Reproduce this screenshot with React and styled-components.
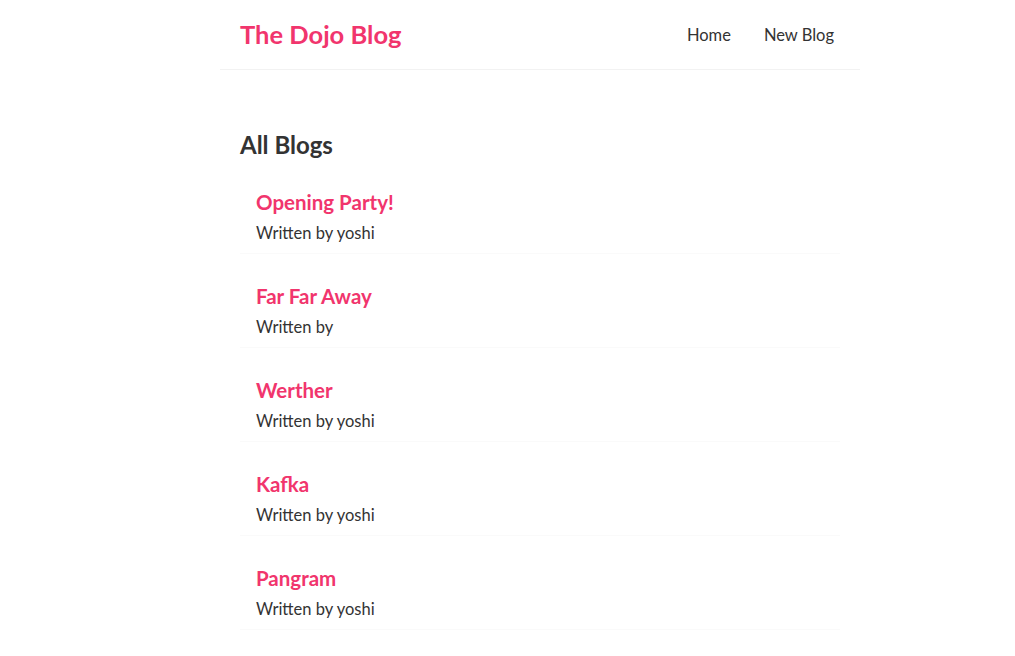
import React from "react";
import styled, { createGlobalStyle } from "styled-components";

const GlobalStyle = createGlobalStyle`
  * {
    margin: 0;
    font-family: "Lato", "Noto Sans", sans-serif;
    color: #333;
  }
  body {
    background: #fff;
  }
`;

// the page is centred on a slightly wider canvas than the window
const Page = styled.div`
  padding-left: 65px;
`;

const Navbar = styled.nav`
  padding: 20px;
  display: flex;
  align-items: center;
  max-width: 600px;
  margin: 0 auto;
  border-bottom: 1px solid #f2f2f2;
`;

const Brand = styled.h1`
  color: #f1356d;
  font-size: 25.5px;
  line-height: 29px;
  font-weight: 700;
`;

const Links = styled.div`
  margin-left: auto;
`;

const NavLink = styled.a`
  margin-left: 21px;
  text-decoration: none;
  padding: 6px;
  font-size: 16.5px;
  font-weight: 400;
  color: #333;
`;

const Content = styled.div`
  max-width: 600px;
  margin: 40px auto;
  padding: 20px;
`;

const Heading = styled.h2`
  font-size: 24px;
  line-height: 30px;
  font-weight: 700;
`;

const Preview = styled.div`
  padding: 10px 16px;
  margin: 20px 0;
  border-bottom: 1px solid #fafafa;
`;

const PreviewTitle = styled.h2`
  font-size: 20.5px;
  line-height: 25px;
  font-weight: 700;
  color: #f1356d;
  margin-bottom: 8px;
`;

const Author = styled.p`
  font-size: 16.5px;
  line-height: 20px;
  font-weight: 400;
`;

const blogs = [
  { id: 1, title: "Opening Party!", author: "yoshi" },
  { id: 2, title: "Far Far Away", author: "" },
  { id: 3, title: "Werther", author: "yoshi" },
  { id: 4, title: "Kafka", author: "yoshi" },
  { id: 5, title: "Pangram", author: "yoshi" },
];

const App = () => {
  return (
    <Page>
      <GlobalStyle />
      <Navbar>
        <Brand>The Dojo Blog</Brand>
        <Links>
          <NavLink href="#">Home</NavLink>
          <NavLink href="#">New Blog</NavLink>
        </Links>
      </Navbar>
      <Content>
        <Heading>All Blogs</Heading>
        {blogs.map((blog) => (
          <Preview key={blog.id}>
            <PreviewTitle>{blog.title}</PreviewTitle>
            <Author>Written by {blog.author}</Author>
          </Preview>
        ))}
      </Content>
    </Page>
  );
};

export default App;
